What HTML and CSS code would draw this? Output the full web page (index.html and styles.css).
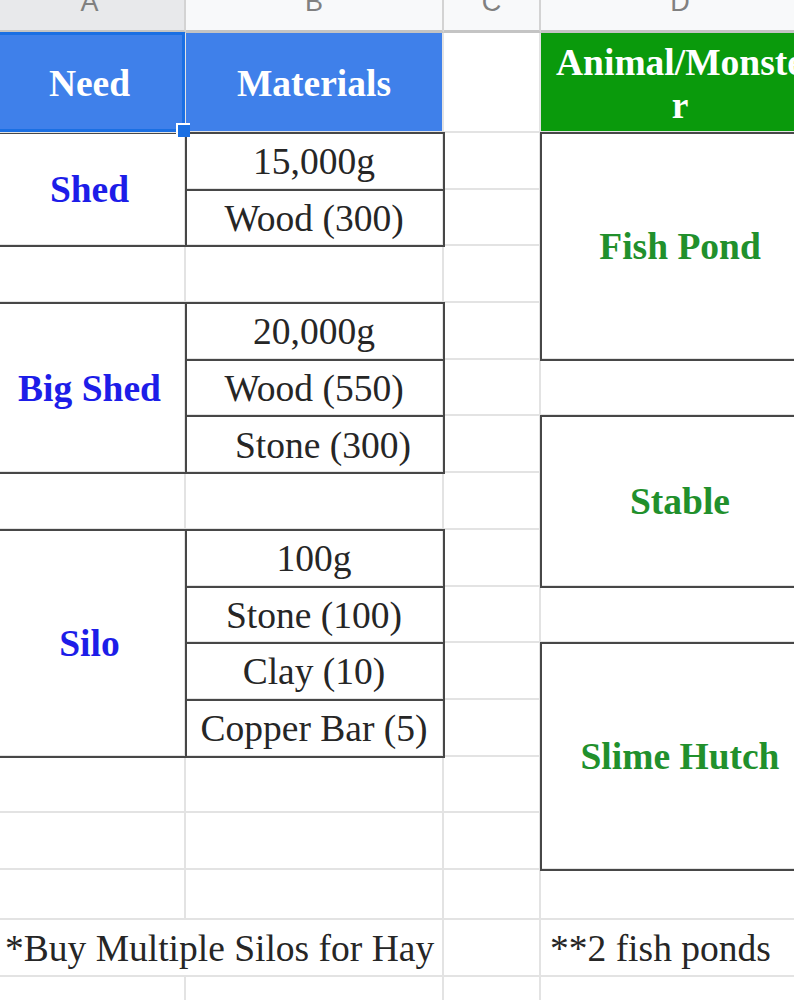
FILE: index.html
```html
<!DOCTYPE html>
<html>
<head>
<meta charset="utf-8">
<title>Sheet</title>
<link rel="stylesheet" href="styles.css">
</head>
<body>
<div class="sheet">
<table class="grid">
<colgroup><col class="ca"><col class="cb"><col class="cc"><col class="cd"></colgroup>
<tr class="colhead">
  <th class="sel"><span>A</span></th><th><span>B</span></th><th><span>C</span></th><th><span>D</span></th>
</tr>
<tr class="r1">
  <td class="hdr blue a1">Need</td>
  <td class="hdr blue">Materials</td>
  <td></td>
  <td class="hdr green wrap">Animal/Monste<br>r</td>
</tr>
<tr class="r">
  <td class="box item bt" rowspan="2">Shed</td>
  <td class="box">15,000g</td>
  <td></td>
  <td class="box item gt" rowspan="4">Fish Pond</td>
</tr>
<tr class="r"><td class="box">Wood (300)</td><td></td></tr>
<tr class="r"><td></td><td></td><td></td></tr>
<tr class="r">
  <td class="box item bt" rowspan="3">Big Shed</td>
  <td class="box">20,000g</td>
  <td></td>
</tr>
<tr class="r"><td class="box">Wood (550)</td><td></td><td></td></tr>
<tr class="r">
  <td class="box sh">Stone (300)</td><td></td>
  <td class="box item gt" rowspan="3">Stable</td>
</tr>
<tr class="r"><td></td><td></td><td></td></tr>
<tr class="r">
  <td class="box item bt" rowspan="4">Silo</td>
  <td class="box">100g</td>
  <td></td>
</tr>
<tr class="r"><td class="box">Stone (100)</td><td></td><td></td></tr>
<tr class="r">
  <td class="box">Clay (10)</td><td></td>
  <td class="box item gt" rowspan="4">Slime Hutch</td>
</tr>
<tr class="r"><td class="box">Copper Bar (5)</td><td></td></tr>
<tr class="r"><td></td><td></td><td></td></tr>
<tr class="r"><td></td><td></td><td></td></tr>
<tr class="r15"><td></td><td></td><td></td><td></td></tr>
<tr class="r">
  <td class="note na" colspan="2">*Buy Multiple Silos for Hay</td>
  <td></td>
  <td class="note nd">**2 fish ponds</td>
</tr>
<tr class="r"><td></td><td></td><td></td><td></td></tr>
</table>
</div>
</body>
</html>
```

FILE: styles.css
```css
html, body {
  margin: 0;
  padding: 0;
  background: #ffffff;
}
body {
  width: 794px;
  height: 1000px;
  overflow: hidden;
  font-family: "Liberation Serif", "Times New Roman", serif;
}
.sheet {
  margin-left: -5px;
}
.grid {
  border-collapse: separate;
  border-spacing: 0;
  table-layout: fixed;
  width: 826px;
}
.ca { width: 191px; }
.cb { width: 258px; }
.cc { width: 97px; }
.cd { width: 280px; }

.colhead { height: 33px; }
.colhead th {
  padding: 0;
  height: 33px;
  box-sizing: border-box;
  background: #f8f9fa;
  border-right: 2px solid #d3d3d3;
  border-bottom: 3px solid #c4c4c4;
  font-family: "Liberation Sans", Arial, sans-serif;
  font-weight: normal;
  font-size: 27px;
  color: #808080;
  vertical-align: top;
  text-align: center;
  overflow: hidden;
}
.colhead th.sel { background: #e8e9eb; }
.colhead th span {
  display: block;
  line-height: 27px;
  margin-top: -11px;
}

td {
  padding: 3px 8px 0 8px;
  border-right: 2px solid #e3e3e3;
  border-bottom: 2px solid #e3e3e3;
  font-size: 37.5px;
  line-height: 1;
  color: #262626;
  text-align: center;
  vertical-align: middle;
  white-space: nowrap;
  overflow: hidden;
}
.r1 { height: 100px; }
.r { height: 56.7px; }
.r15 { height: 50px; }

.hdr {
  color: #ffffff;
  font-weight: bold;
}
.blue { background: #3f80ea; }
.green { background: #0a9a0c; }
.wrap {
  white-space: normal;
  line-height: 43px;
}

.box {
  outline: 2px solid #474747;
  outline-offset: -1px;
}
.item { font-weight: bold; }
.bt { color: #1d1de8; }
.gt { color: #21902c; }
.sh { padding-left: 26px; }

.note { text-align: left; }
.na { padding-left: 10px; }
.nd { padding-left: 9px; }

.a1 {
  position: relative;
  overflow: visible;
}
.a1::before {
  content: "";
  position: absolute;
  left: 0;
  top: -1px;
  right: -1px;
  bottom: -1px;
  border: 3px solid #1a6fe3;
  z-index: 2;
}
.a1::after {
  content: "";
  position: absolute;
  right: -6px;
  bottom: -6px;
  width: 12px;
  height: 12px;
  background: #1a6fe3;
  border-top: 2px solid #ffffff;
  border-left: 2px solid #ffffff;
  z-index: 3;
}
```
